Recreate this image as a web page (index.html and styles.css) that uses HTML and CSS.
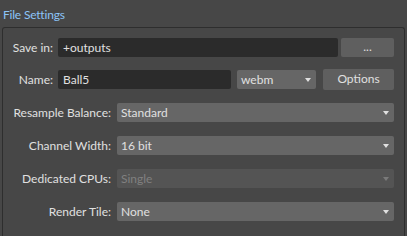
FILE: index.html
```html
<!DOCTYPE html>
<html>
<head>
<meta charset="utf-8">
<link rel="stylesheet" href="styles.css">
</head>
<body>
<div class="panel">
  <div class="title">File Settings</div>
  <div class="group">
    <div class="row r1">
      <span class="label short">Save in:</span>
      <div class="field path">+outputs</div>
      <div class="button dots">...</div>
    </div>
    <div class="row r2">
      <span class="label short">Name:</span>
      <div class="field name">Ball5</div>
      <div class="combo fmt"><span>webm</span><span class="arrow"></span></div>
      <div class="button opts">Options</div>
    </div>
    <div class="row">
      <span class="label long">Resample Balance:</span>
      <div class="combo wide"><span>Standard</span><span class="arrow"></span></div>
    </div>
    <div class="row">
      <span class="label long">Channel Width:</span>
      <div class="combo wide"><span>16 bit</span><span class="arrow"></span></div>
    </div>
    <div class="row">
      <span class="label long">Dedicated CPUs:</span>
      <div class="combo wide disabled"><span>Single</span><span class="arrow"></span></div>
    </div>
    <div class="row">
      <span class="label long">Render Tile:</span>
      <div class="combo wide"><span>None</span><span class="arrow"></span></div>
    </div>
  </div>
</div>
</body>
</html>
```
FILE: styles.css
```css
html, body {
  margin: 0;
  padding: 0;
  background: #474747;
  width: 407px;
  height: 236px;
  overflow: hidden;
}
.panel {
  font-family: "Lato", "Noto Sans", sans-serif;
  font-size: 12px;
  color: #e0e0e0;
}
.title {
  color: #8cc4f8;
  padding: 7px 0 0 3px;
  height: 20px;
  line-height: 16px;
  letter-spacing: -0.2px;
}
.group {
  margin: 0 2px 0 2px;
  border: 1px solid #2e2e2e;
  border-bottom: none;
  border-radius: 3px 3px 0 0;
  background: #474747;
  height: 220px;
  padding: 10px 10px 0 0;
  box-sizing: border-box;
}
.row {
  display: flex;
  align-items: center;
  height: 19px;
  margin-bottom: 14px;
}
.row.r1 { margin-bottom: 13px; }
.label {
  text-align: right;
  white-space: nowrap;
  line-height: 19px;
}
.label.short { width: 50px; margin-right: 5px; }
.label.long { width: 108px; margin-right: 6px; }
.field {
  background: #2b2b2b;
  height: 19px;
  line-height: 19px;
  border-radius: 2px;
  padding-left: 5px;
  box-sizing: border-box;
}
.field.path { width: 280px; }
.field.name { width: 173px; }
.button {
  background: #5f5f5f;
  border-radius: 2px;
  height: 19px;
  line-height: 18px;
  text-align: center;
  box-sizing: border-box;
}
.button.dots { width: 53px; margin-left: 3px; }
.button.opts { width: 71px; margin-left: 7px; height: 21px; line-height: 20px; }
.combo {
  background: #666666;
  border-radius: 2px;
  height: 19px;
  line-height: 19px;
  display: flex;
  justify-content: space-between;
  align-items: center;
  padding: 0 5px 0 4px;
  box-sizing: border-box;
}
.combo.fmt { width: 79px; margin-left: 6px; }
.combo.wide { width: 277px; }
.combo.disabled { background: #545454; color: #808080; }
.arrow {
  width: 0;
  height: 0;
  border-left: 3.5px solid transparent;
  border-right: 3.5px solid transparent;
  border-top: 4px solid #e0e0e0;
}
.combo.disabled .arrow { border-top-color: #7a7a7a; }
```
